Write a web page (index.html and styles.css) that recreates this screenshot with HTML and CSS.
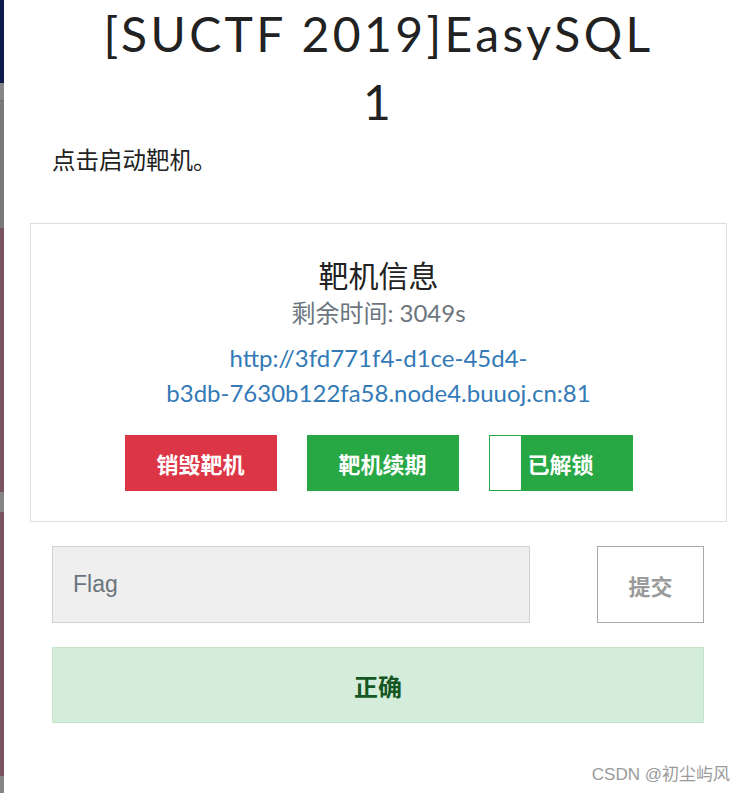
FILE: index.html
```html
<!DOCTYPE html>
<html lang="zh-CN">
<head>
<meta charset="utf-8">
<title>EasySQL</title>
<link rel="stylesheet" href="styles.css">
</head>
<body>
<div class="page">
  <div class="strip">
    <div class="seg navy"></div>
    <div class="seg grey-a"></div>
    <div class="seg grey-b"></div>
    <div class="seg mauve-a"></div>
    <div class="seg grey-c"></div>
    <div class="seg mauve-b"></div>
    <div class="seg grey-d"></div>
  </div>
  <main class="modal">
    <h1 class="title">[SUCTF 2019]EasySQL 1</h1>
    <p class="desc">点击启动靶机。</p>
    <section class="card">
      <h2 class="card-title">靶机信息</h2>
      <p class="remain">剩余时间: 3049s</p>
      <p class="url-wrap"><a class="url" href="#">http://3fd771f4-d1ce-45d4-<br>b3db-7630b122fa58.node4.buuoj.cn:81</a></p>
      <div class="actions">
        <button class="btn btn-red" type="button">销毁靶机</button>
        <button class="btn btn-green" type="button">靶机续期</button>
        <button class="btn btn-unlocked" type="button">已解锁</button>
      </div>
    </section>
    <form class="flag-row">
      <input class="flag-input" type="text" placeholder="Flag">
      <button class="submit" type="button">提交</button>
    </form>
    <div class="alert">正确</div>
  </main>
  <div class="watermark">CSDN @初尘屿风</div>
</div>
</body>
</html>
```

FILE: styles.css
```css
html, body {
  margin: 0;
  padding: 0;
  background: #ffffff;
}

.page {
  position: relative;
  display: flex;
  align-items: stretch;
  width: 745px;
  height: 793px;
  overflow: hidden;
  font-family: "Lato", "Noto Sans CJK SC", sans-serif;
  color: #212529;
}

.strip {
  width: 4px;
  display: flex;
  flex-direction: column;
  flex-shrink: 0;
}

.seg { flex-shrink: 0; }
.navy { height: 83px; background: #0e1a4c; }
.grey-a { height: 17px; background: #868686; border-bottom: 1px solid #6d6d6d; }
.grey-b { height: 127px; background: #7a7a7a; }
.mauve-a { height: 264px; background: #7a5161; }
.grey-c { height: 20px; background: #868686; }
.mauve-b { height: 264px; background: #7a5161; }
.grey-d { flex: 1; background: #868686; }

.modal {
  margin-left: 26px;
  width: 697px;
  display: flex;
  flex-direction: column;
}

.title {
  margin: 0 auto;
  max-width: 580px;
  font-family: "Lato", sans-serif;
  font-weight: 400;
  font-size: 48px;
  line-height: 68px;
  letter-spacing: 3.4px;
  text-align: center;
  color: #222222;
}

.desc {
  margin: 8px 0 0 22px;
  font-family: "Noto Sans CJK SC", sans-serif;
  font-size: 23.5px;
  line-height: 30px;
  color: #222222;
}

.card {
  margin-top: 49px;
  border: 1px solid #dddddd;
  padding: 30px 20px 30px;
  text-align: center;
}

.card-title {
  margin: 0;
  font-family: "Noto Sans CJK SC", sans-serif;
  font-weight: 400;
  font-size: 30px;
  line-height: 40px;
  color: #222222;
}

.remain {
  margin: 5px 0 0;
  font-size: 24px;
  line-height: 28px;
  color: #6c757d;
}

.url-wrap {
  margin: 13px auto 0;
  font-size: 24px;
  line-height: 35px;
}

.url {
  color: #337ab7;
  text-decoration: none;
}

.actions {
  margin-top: 25px;
  display: flex;
  justify-content: center;
  gap: 30px;
}

.btn {
  height: 56px;
  border: 1px solid transparent;
  font-family: "Noto Sans CJK SC", sans-serif;
  font-weight: 700;
  font-size: 22px;
  color: #ffffff;
  padding: 0;
}

.btn-red {
  width: 152px;
  background: #dc3545;
  border-color: #dc3545;
}

.btn-green {
  width: 152px;
  background: #28a745;
  border-color: #28a745;
}

.btn-unlocked {
  width: 144px;
  border-color: #28a745;
  background: linear-gradient(to right, #ffffff 31px, #28a745 31px);
}

.flag-row {
  margin: 24px 23px 0 22px;
  display: flex;
  justify-content: space-between;
}

.flag-input {
  box-sizing: border-box;
  width: 478px;
  height: 77px;
  margin: 0;
  padding: 0 20px;
  border: 1px solid #cfd1d6;
  background: #efefef;
  font-family: "Liberation Sans", sans-serif;
  font-size: 23px;
  color: #495057;
}

.flag-input::placeholder {
  color: #6c757d;
}

.submit {
  box-sizing: border-box;
  width: 107px;
  height: 77px;
  margin: 0;
  border: 1px solid #a8a8a8;
  background: #ffffff;
  font-family: "Noto Sans CJK SC", sans-serif;
  font-weight: 700;
  font-size: 22px;
  color: #9a9a9a;
}

.alert {
  margin: 24px 23px 0 22px;
  height: 74px;
  border: 1px solid #c3e6cb;
  background: #d4edda;
  display: flex;
  align-items: center;
  justify-content: center;
  font-family: "Noto Sans CJK SC", sans-serif;
  font-weight: 700;
  font-size: 24px;
  color: #155724;
}

.watermark {
  position: absolute;
  right: 15px;
  bottom: 8px;
  font-family: "Liberation Sans", "Noto Sans CJK SC", sans-serif;
  font-size: 17px;
  color: #9a9a9a;
}
```
